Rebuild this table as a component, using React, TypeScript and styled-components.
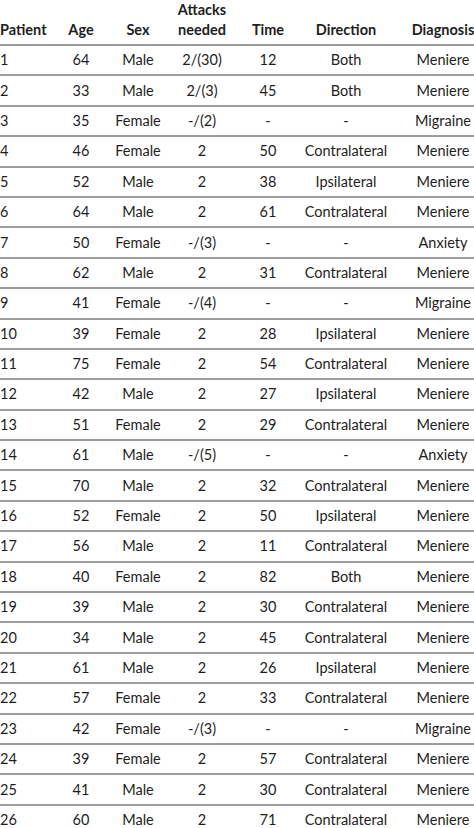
import { FC } from "react";
import styled, { createGlobalStyle } from "styled-components";

type Row = [string, string, string, string, string, string, string];

const rows: Row[] = [
    ["1", "64", "Male", "2/(30)", "12", "Both", "Meniere"],
    ["2", "33", "Male", "2/(3)", "45", "Both", "Meniere"],
    ["3", "35", "Female", "-/(2)", "-", "-", "Migraine"],
    ["4", "46", "Female", "2", "50", "Contralateral", "Meniere"],
    ["5", "52", "Male", "2", "38", "Ipsilateral", "Meniere"],
    ["6", "64", "Male", "2", "61", "Contralateral", "Meniere"],
    ["7", "50", "Female", "-/(3)", "-", "-", "Anxiety"],
    ["8", "62", "Male", "2", "31", "Contralateral", "Meniere"],
    ["9", "41", "Female", "-/(4)", "-", "-", "Migraine"],
    ["10", "39", "Female", "2", "28", "Ipsilateral", "Meniere"],
    ["11", "75", "Female", "2", "54", "Contralateral", "Meniere"],
    ["12", "42", "Male", "2", "27", "Ipsilateral", "Meniere"],
    ["13", "51", "Female", "2", "29", "Contralateral", "Meniere"],
    ["14", "61", "Male", "-/(5)", "-", "-", "Anxiety"],
    ["15", "70", "Male", "2", "32", "Contralateral", "Meniere"],
    ["16", "52", "Female", "2", "50", "Ipsilateral", "Meniere"],
    ["17", "56", "Male", "2", "11", "Contralateral", "Meniere"],
    ["18", "40", "Female", "2", "82", "Both", "Meniere"],
    ["19", "39", "Male", "2", "30", "Contralateral", "Meniere"],
    ["20", "34", "Male", "2", "45", "Contralateral", "Meniere"],
    ["21", "61", "Male", "2", "26", "Ipsilateral", "Meniere"],
    ["22", "57", "Female", "2", "33", "Contralateral", "Meniere"],
    ["23", "42", "Female", "-/(3)", "-", "-", "Migraine"],
    ["24", "39", "Female", "2", "57", "Contralateral", "Meniere"],
    ["25", "41", "Male", "2", "30", "Contralateral", "Meniere"],
    ["26", "60", "Male", "2", "71", "Contralateral", "Meniere"],
];

const GlobalStyle = createGlobalStyle`
    html, body {
        margin: 0;
        padding: 0;
        background: #fff;
        overflow: hidden;
    }
`;

// column widths chosen so the centres fall where the scan has them
const COLS = "56px 50px 64px 64px 68px 88px 106px";

const Page = styled.div`
    width: 474px;
    height: 828px;
    overflow: hidden;
    font-family: Lato, "Liberation Sans", sans-serif;
    font-size: 14.5px;
    color: #1e1e1e;
`;

const Table = styled.div`
    width: 496px;
`;

const HeadRow = styled.div`
    display: grid;
    grid-template-columns: ${COLS};
    height: 44px;
    align-items: end;
    padding-bottom: 0;
    border-bottom: 2px solid #9a9a9a;
    font-weight: 700;
`;

const BodyRow = styled.div`
    display: grid;
    grid-template-columns: ${COLS};
    height: 28.4px;
    align-items: center;
    border-bottom: 2px solid #9d9d9d;
`;

const Cell = styled.div<{ $left?: boolean }>`
    text-align: ${(p) => (p.$left ? "left" : "center")};
    line-height: 20px;
    white-space: nowrap;
`;

const HeadCell = styled(Cell)`
    padding-bottom: 5px;
`;

const App: FC = () => {
    return (
        <Page>
            <GlobalStyle />
            <Table>
                <HeadRow>
                    <HeadCell $left>Patient</HeadCell>
                    <HeadCell>Age</HeadCell>
                    <HeadCell>Sex</HeadCell>
                    <HeadCell>
                        Attacks
                        <br />
                        needed
                    </HeadCell>
                    <HeadCell>Time</HeadCell>
                    <HeadCell>Direction</HeadCell>
                    <HeadCell>Diagnosis</HeadCell>
                </HeadRow>
                {rows.map((r) => (
                    <BodyRow key={r[0]}>
                        {r.map((v, i) => (
                            <Cell key={i} $left={i === 0}>
                                {v}
                            </Cell>
                        ))}
                    </BodyRow>
                ))}
            </Table>
        </Page>
    );
};

export default App;
